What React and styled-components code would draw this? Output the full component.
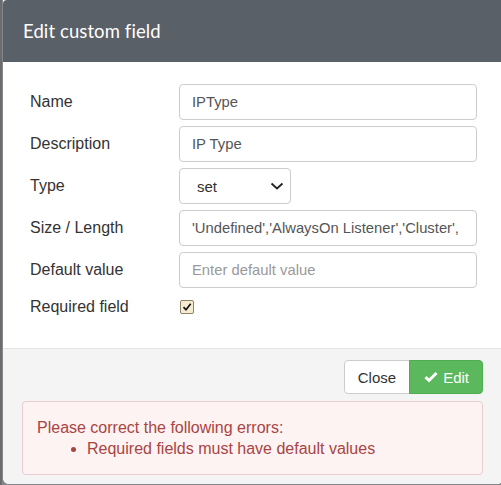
import React from "react";
import styled, { createGlobalStyle } from "styled-components";

const Global = createGlobalStyle`
  html, body { margin: 0; padding: 0; height: 100%; }
  body {
    background: #7d7f82;
    font-family: "Liberation Sans", Arial, sans-serif;
    overflow: hidden;
  }
`;

const Backdrop = styled.div`
  height: 485px;
  padding-left: 3px;
  border-left: 2px solid #6a6c70;
  box-sizing: border-box;
  background: #85878a;
  display: flex;
`;

const Modal = styled.div`
  width: 500px;
  height: 484px;
  margin-left: -2px;
  background: #fff;
  border-radius: 0 0 6px 6px;
  overflow: hidden;
  display: flex;
  flex-direction: column;
  flex-shrink: 0;
`;

const Header = styled.div`
  height: 62px;
  background: #5a6068;
  display: flex;
  align-items: center;
  padding-left: 20px;
  border-radius: 4px 0 0 0;
  flex-shrink: 0;
`;

const Title = styled.h4`
  margin: 0;
  color: #fff;
  font-family: Lato, "Open Sans", sans-serif;
  font-weight: 400;
  font-size: 18.5px;
  letter-spacing: 0.1px;
`;

const Body = styled.div`
  padding: 22px 26px 28px 27px;
  display: grid;
  grid-template-columns: 149px 1fr;
  grid-template-rows: repeat(5, 36px) 26px;
  row-gap: 6px;
  align-items: center;
  border-bottom: 1px solid #e5e5e5;
  flex-shrink: 0;
`;

const Label = styled.label`
  font-size: 16px;
  color: #333;
`;

const Input = styled.input`
  box-sizing: border-box;
  width: 100%;
  height: 36px;
  padding: 0 12px;
  border: 1px solid #ccc;
  border-radius: 4px;
  font-family: "Liberation Sans", Arial, sans-serif;
  font-size: 14.8px;
  color: #555;
  background: #fff;
  outline: none;
  &::placeholder { color: #999; }
`;

const SelectBox = styled.div`
  box-sizing: border-box;
  width: 112px;
  height: 36px;
  border: 1px solid #ccc;
  border-radius: 4px;
  display: flex;
  align-items: center;
  justify-content: space-between;
  padding: 0 4px 0 17px;
  font-size: 15px;
  color: #333;
`;

const CheckRow = styled.div`
  height: 26px;
  display: flex;
  align-items: center;
`;

const CheckBox = styled.span`
  box-sizing: border-box;
  width: 14px;
  height: 14px;
  margin-left: 1px;
  border: 1px solid #8f826a;
  border-radius: 2px;
  background: #f7ecd2;
  display: flex;
  align-items: center;
  justify-content: center;
`;

const Footer = styled.div`
  flex: 1;
  background: #f4f4f4;
  padding: 11px 20px 0 19px;
  display: flex;
  flex-direction: column;
  gap: 7px;
`;

const BtnGroup = styled.div`
  display: flex;
  justify-content: flex-end;
`;

const Button = styled.button`
  box-sizing: border-box;
  height: 34px;
  padding: ${(p) => (p.$primary ? "0 13px 0 14px" : "0 13px")};
  font-family: "Liberation Sans", Arial, sans-serif;
  font-size: 15px;
  display: flex;
  align-items: center;
  gap: 5px;
  border: 1px solid ${(p) => (p.$primary ? "#4cae4c" : "#ccc")};
  background: ${(p) => (p.$primary ? "#5cb85c" : "#fff")};
  color: ${(p) => (p.$primary ? "#fff" : "#333")};
  border-radius: ${(p) => (p.$primary ? "0 4px 4px 0" : "4px 0 0 4px")};
  ${(p) => (p.$primary ? "margin-left: -1px;" : "")}
`;

const Alert = styled.div`
  box-sizing: border-box;
  border: 1px solid #ebccd1;
  background: #fdf3f3;
  color: #a94442;
  border-radius: 4px;
  padding: 15px 14px;
  font-size: 16px;
  line-height: 21px;
`;

const List = styled.ul`
  margin: 0;
  padding-left: 50px;
`;

export default function App() {
  return (
    <>
      <Global />
      <Backdrop>
        <Modal>
          <Header>
            <Title>Edit custom field</Title>
          </Header>
          <Body>
            <Label>Name</Label>
            <Input defaultValue="IPType" />
            <Label>Description</Label>
            <Input defaultValue="IP Type" />
            <Label>Type</Label>
            <SelectBox>
              <span>set</span>
              <svg width="18" height="12" viewBox="0 0 18 12">
                <path d="M3.5 3.5 L9 8.5 L14.5 3.5" fill="none" stroke="#222" strokeWidth="1.8" />
              </svg>
            </SelectBox>
            <Label>Size / Length</Label>
            <Input defaultValue="'Undefined','AlwaysOn Listener','Cluster'," />
            <Label>Default value</Label>
            <Input placeholder="Enter default value" />
            <Label>Required field</Label>
            <CheckRow>
              <CheckBox>
                <svg width="10" height="10" viewBox="0 0 10 10">
                  <path d="M1.5 5.2 L4 7.8 L8.7 1.8" fill="none" stroke="#111" strokeWidth="1.7" />
                </svg>
              </CheckBox>
            </CheckRow>
          </Body>
          <Footer>
            <BtnGroup>
              <Button>Close</Button>
              <Button $primary>
                <svg width="14" height="12" viewBox="0 0 14 12">
                  <path d="M1.5 6.2 L5 9.5 L12.5 2" fill="none" stroke="#fff" strokeWidth="3" />
                </svg>
                Edit
              </Button>
            </BtnGroup>
            <Alert>
              Please correct the following errors:
              <List>
                <li>Required fields must have default values</li>
              </List>
            </Alert>
          </Footer>
        </Modal>
      </Backdrop>
    </>
  );
}
